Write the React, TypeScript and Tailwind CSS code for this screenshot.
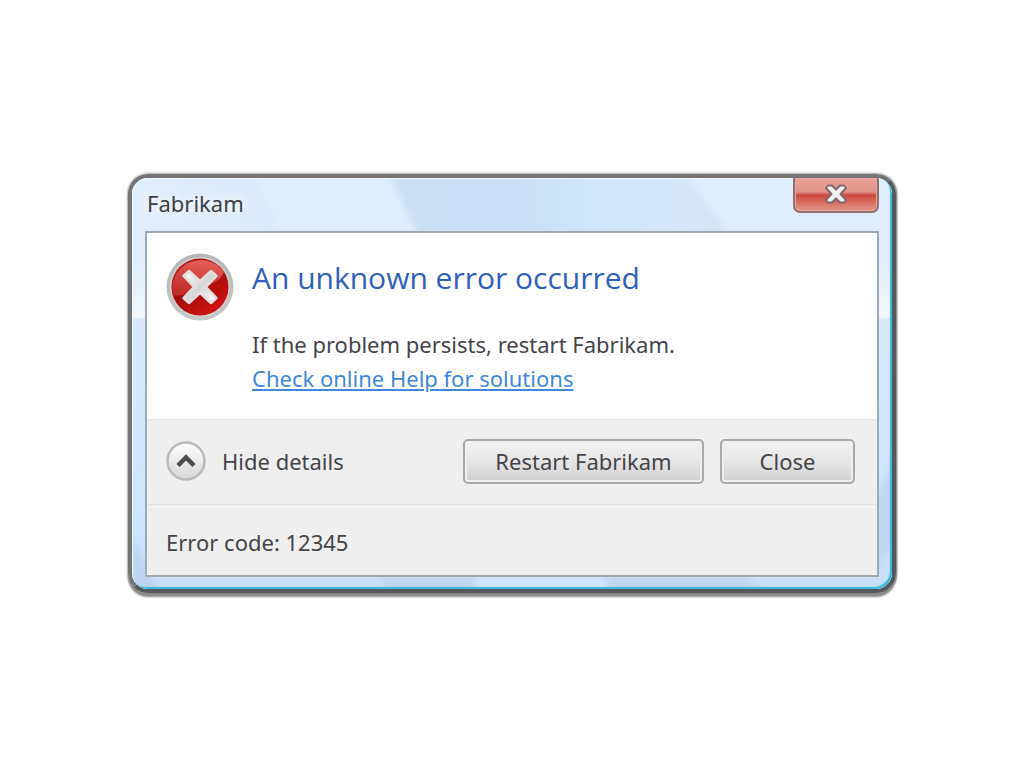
import { useState } from 'react';

function ErrorIcon() {
  return (
    <svg viewBox="0 0 68 68" className="size-[68px] shrink-0" aria-hidden="true">
      <defs>
        <linearGradient id="ring" x1="0" y1="0" x2="0" y2="1">
          <stop offset="0" stopColor="#b5b7b7" />
          <stop offset="1" stopColor="#c6c9c8" />
        </linearGradient>
        <linearGradient id="ball" x1="0" y1="0" x2="0.6" y2="1">
          <stop offset="0" stopColor="#b80f0f" />
          <stop offset="0.6" stopColor="#a50c0c" />
          <stop offset="1" stopColor="#d01212" />
        </linearGradient>
        <linearGradient id="gloss" x1="0.6" y1="0" x2="0.4" y2="1">
          <stop offset="0" stopColor="#e2605a" />
          <stop offset="0.6" stopColor="#cc3c38" />
          <stop offset="1" stopColor="#bd2b28" />
        </linearGradient>
        <linearGradient id="cross" x1="0" y1="0" x2="1" y2="1">
          <stop offset="0" stopColor="#ffffff" />
          <stop offset="0.5" stopColor="#d6d6d6" />
          <stop offset="1" stopColor="#ffffff" />
        </linearGradient>
      </defs>
      <circle cx="34" cy="34" r="33.5" fill="url(#ring)" />
      <circle cx="34" cy="34" r="30" fill="#cfcfce" />
      <circle cx="34" cy="34" r="28.5" fill="url(#ball)" />
      <path d="M7 42A28.5 28.5 0 0 1 58 19C56 27 46 31 36 35C26 40 16 44 7 42Z" fill="url(#gloss)" />
      <path
        d="M23 18L34 28L45 18L50.500 23L40 34L50.500 45L45 50L34 40L23 50L17.500 45L28 34L17.500 23Z"
        fill="url(#cross)"
        stroke="#e6dcdc"
        strokeWidth="2.500"
        strokeLinejoin="round"
      />
    </svg>
  );
}

function Glare() {
  return (
    <svg
      viewBox="0 0 760 412"
      preserveAspectRatio="none"
      className="absolute inset-0 size-full"
      aria-hidden="true"
    >
      <defs>
        <linearGradient id="band" x1="0" y1="0" x2="1" y2="0">
          <stop offset="0" stopColor="#cbdff3" />
          <stop offset="0.35" stopColor="#c9dff6" />
          <stop offset="0.6" stopColor="#cfe5fa" />
          <stop offset="0.85" stopColor="#d5e7fa" />
          <stop offset="1" stopColor="#d3e3f4" />
        </linearGradient>
        <linearGradient id="fade" x1="0" y1="0" x2="1" y2="0">
          <stop offset="0" stopColor="#dfeefd" />
          <stop offset="1" stopColor="#d8e9fa" />
        </linearGradient>
        <linearGradient id="sides" x1="0" y1="0" x2="0" y2="1">
          <stop offset="0" stopColor="#ddeefe" />
          <stop offset="0.2" stopColor="#deedfc" />
          <stop offset="0.34" stopColor="#f3f8fe" />
          <stop offset="0.341" stopColor="#d9e9fb" />
          <stop offset="0.8" stopColor="#cfe5ff" />
          <stop offset="1" stopColor="#c9dff8" />
        </linearGradient>
        <filter id="soft" x="-10%" y="-10%" width="120%" height="120%">
          <feGaussianBlur stdDeviation="3" />
        </filter>
      </defs>
      <rect width="760" height="412" fill="url(#sides)" />
      <g filter="url(#soft)">
        <path d="M0 -10H117L153 60H0Z" fill="url(#fade)" />
        <path d="M255 -10H548L600 60H287Z" fill="url(#band)" />
        <path d="M0 360L30 420H0Z" fill="#bfd5ef" />
        <path d="M250 395H343L347 420H250Z" fill="#c2d8f1" />
        <path d="M343 395H472L478 420H347Z" fill="#cfe5ff" />
        <path d="M472 395H610L640 420H478Z" fill="#c2d8f1" />
        <path d="M745 320L765 270V360L745 395Z" fill="#c0d8f3" />
      </g>
    </svg>
  );
}

function CloseGlyph() {
  return (
    <svg viewBox="0 0 24 20" className="h-5 w-6" aria-hidden="true">
      <path
        d="M4 1.500H8L12 5.500L16 1.500H20L22 4L16.500 10L22 16L20 18.500H16L12 14.500L8 18.500H4L2 16L7.500 10L2 4Z"
        fill="#f0f0f0"
        stroke="#7d696a"
        strokeWidth="2"
        strokeLinejoin="round"
      />
    </svg>
  );
}

const buttonClass =
  'h-[45px] rounded-[5px] border-2 border-[#a8a8a8] bg-linear-to-b from-[#f3f3f3] from-0% via-[#e6e6e6] via-50% to-[#cfcfcf] text-[22px] leading-6 shadow-[inset_0_0_0_2px_#f0f0f0]';

export default function App() {
  const [open, setOpen] = useState(true);

  return (
    <main className="flex min-h-screen items-center justify-center bg-white px-4 pb-0.5 font-['Noto_Sans','Open_Sans',sans-serif] text-[22px] leading-[34px] text-[#444448]">
      <section
        role="dialog"
        aria-labelledby="title"
        className="relative w-full max-w-[768px] overflow-hidden rounded-[20px] border-4 border-[#727478] border-r-[#55595c] border-b-[#55595c] shadow-[0_0_3px_#888,0_4px_2px_#888,1px_0_2px_#777]"
      >
        <Glare />
        <div className="relative rounded-2xl px-[13px] pb-3 shadow-[inset_-2px_-2px_1px_#35b9d8,inset_1px_1px_1px_#f2f9ff]">
          <header className="flex h-[53px] items-start justify-between">
            <h1 id="title" className="mt-2 ml-0.5 text-[22px] text-[#3b4045] [text-shadow:0_0_10px_#fff,0_0_14px_#fff]">
              Fabrikam
            </h1>
            <button
              type="button"
              aria-label="Close window"
              className="flex h-[35px] w-[86px] items-center justify-center rounded-b-[7px] border-2 border-t-0 border-[#93706e] bg-[linear-gradient(to_bottom,#e9a098_0%,#e2948c_42%,#c9463b_52%,#d2594d_62%,#e3968b_100%)] shadow-[inset_0_0_0_1px_#e8aaa2]"
            >
              <CloseGlyph />
            </button>
          </header>

          <div className="border-2 border-[#a0a8b1] bg-[#efefef]">
            <div className="flex gap-[18px] bg-white px-[19px] pt-5 pb-6">
              <ErrorIcon />
              <div>
                <h2 className="mt-2 font-['Open_Sans','Noto_Sans',sans-serif] text-[30px] leading-[34px] text-[#3060bd]">
                  An unknown error occurred
                </h2>
                <p className="mt-8">If the problem persists, restart Fabrikam.</p>
                <a href="#help" className="block w-fit text-[#3f88dc] underline decoration-2 underline-offset-2">
                  Check online Help for solutions
                </a>
              </div>
            </div>

            <div className="flex items-center justify-between border-t border-[#e4e4e4] pt-[19px] pb-5 pr-[22px] pl-[19px]">
              <button type="button" aria-expanded={open} onClick={() => setOpen(!open)} className="flex items-center gap-4">
                <svg viewBox="0 0 40 40" className="size-10" aria-hidden="true">
                  <defs>
                    <linearGradient id="knob" x1="0" y1="0" x2="0" y2="1">
                      <stop offset="0" stopColor="#ffffff" />
                      <stop offset="1" stopColor="#d6d6d6" />
                    </linearGradient>
                  </defs>
                  <circle cx="20" cy="20" r="18.500" fill="url(#knob)" stroke="#bababa" strokeWidth="2.500" />
                  <path
                    d={open ? 'M12 24.500L20 16.500L28 24.500' : 'M12 16.500L20 24.500L28 16.500'}
                    fill="none"
                    stroke="#4c4c4c"
                    strokeWidth="4.500"
                  />
                </svg>
                {open ? 'Hide details' : 'Show details'}
              </button>
              <div className="flex gap-4">
                <button type="button" className={`${buttonClass} w-[241px]`}>
                  Restart Fabrikam
                </button>
                <button type="button" className={`${buttonClass} w-[135px]`}>
                  Close
                </button>
              </div>
            </div>

            {open && (
              <p className="border-t-2 border-[#e7e7e7] px-[19px] pt-[19px] pb-4 shadow-[inset_0_1px_0_#f8f8f8]">Error code: 12345</p>
            )}
          </div>
        </div>
      </section>
    </main>
  );
}
